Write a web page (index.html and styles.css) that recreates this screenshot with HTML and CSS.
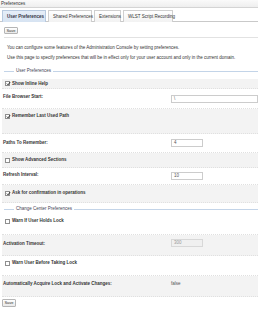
FILE: index.html
```html
<!DOCTYPE html>
<html>
<head>
<meta charset="utf-8">
<link rel="stylesheet" href="styles.css">
</head>
<body>
<div class="header">Preferences</div>
<div class="tabs">
  <div class="tab active">User Preferences</div>
  <div class="tab">Shared Preferences</div>
  <div class="tab">Extensions</div>
  <div class="tab">WLST Script Recording</div>
</div>
<div class="toolbar"><button class="btn">Save</button></div>
<div class="intro">
  <p>You can configure some features of the Administration Console by setting preferences.</p>
  <p>Use this page to specify preferences that will be in effect only for your user account and only in the current domain.</p>
</div>
<div class="form">
  <div class="legend"><span class="lline short"></span><span class="ltext">User Preferences</span><span class="lline"></span></div>
  <div class="row grey h10 center"><span class="cb"><svg viewBox="0 0 6 6"><path d="M1 3.1 L2.5 4.6 L5 1.2" fill="none" stroke="#333" stroke-width="1.2"/></svg></span><span class="clabel">Show Inline Help</span></div>
  <div class="row h20 pt5"><span class="label">File Browser Start:</span><span class="input wide m1">\</span></div>
  <div class="row grey h25 pt4"><span class="cb"><svg viewBox="0 0 6 6"><path d="M1 3.1 L2.5 4.6 L5 1.2" fill="none" stroke="#333" stroke-width="1.2"/></svg></span><span class="clabel">Remember Last Used Path</span></div>
  <div class="row h19 pt6"><span class="label">Paths To Remember:</span><span class="input mn1">4</span></div>
  <div class="row grey h15 pt4"><span class="cb"></span><span class="clabel">Show Advanced Sections</span></div>
  <div class="row h17 pt4"><span class="label">Refresh Interval:</span><span class="input">10</span></div>
  <div class="row grey h18 pt5"><span class="cb"><svg viewBox="0 0 6 6"><path d="M1 3.1 L2.5 4.6 L5 1.2" fill="none" stroke="#333" stroke-width="1.2"/></svg></span><span class="clabel">Ask for confirmation in operations</span></div>
  <div class="legend l2"><span class="lline short"></span><span class="ltext">Change Center Preferences</span><span class="lline"></span></div>
  <div class="row h20 pt3"><span class="cb"></span><span class="clabel">Warn If User Holds Lock</span></div>
  <div class="row grey h21 pt6"><span class="label">Activation Timeout:</span><span class="input disabled mn2">300</span></div>
  <div class="row h20 pt4"><span class="cb"></span><span class="clabel">Warn User Before Taking Lock</span></div>
  <div class="row grey h21 pt5"><span class="label">Automatically Acquire Lock and Activate Changes:</span><span class="value">false</span></div>
</div>
<div class="toolbar bottom"><button class="btn">Save</button></div>
</body>
</html>
```
FILE: styles.css
```css
* { box-sizing: border-box; }
html, body { margin: 0; padding: 0; background: #fff; }
body {
  width: 258px;
  height: 320px;
  overflow: hidden;
  font-family: "Liberation Sans", Arial, sans-serif;
  font-size: 4.5px;
  color: #333;
  line-height: 6px;
}
.header {
  height: 8px;
  line-height: 7px;
  padding-left: 1px;
  background: linear-gradient(#fafafa, #eeeeee);
  border-bottom: 1px solid #d4d4d4;
  color: #333;
}
.tabs {
  display: flex;
  margin-top: 2px;
  padding-left: 2px;
  height: 12px;
  border-bottom: 1px solid #c9c9c9;
}
.tab {
  height: 12px;
  line-height: 11px;
  padding: 0 4px;
  margin-right: 2px;
  border: 1px solid #cfcfcf;
  border-bottom: none;
  background: linear-gradient(#ffffff, #f2f2f2);
  color: #333;
  white-space: nowrap;
}
.tab:nth-child(1) { width: 44px; }
.tab:nth-child(2) { width: 44px; }
.tab:nth-child(3) { width: 27px; }
.tab:nth-child(4) { width: 50px; }
.tab.active {
  background: linear-gradient(#e6eef8, #d6e3f2);
  border-color: #b7c9df;
  font-weight: bold;
  color: #334;
}
.toolbar {
  padding: 5px 0 0 0;
  height: 16px;
  border-bottom: 1px solid #e2e2e2;
  margin: 0 0 0 4px;
}
.btn {
  display: block;
  width: 14px;
  height: 7px;
  padding: 0;
  border: 1px solid #b5b5b5;
  border-radius: 1px;
  background: linear-gradient(#ffffff, #e9e9e9);
  font-family: "Liberation Sans", Arial, sans-serif;
  font-size: 4px;
  line-height: 5px;
  color: #333;
}
.toolbar.bottom {
  border-bottom: none;
  margin-left: 2px;
  padding-top: 2px;
}
.toolbar.bottom .btn { height: 8px; line-height: 6px; }
.intro { padding: 7px 0 0 7px; }
.intro p { margin: 0 0 4px 0; white-space: nowrap; }
.form { padding-left: 2px; margin-top: 6px; }
.legend {
  display: flex;
  align-items: center;
  height: 12px;
  padding-bottom: 4px;
}
.legend.l2 { padding-bottom: 0; }
.lline {
  flex: 1;
  height: 1px;
  background: #c3d4e8;
}
.lline.short { flex: 0 0 10px; margin-left: 2px; }
.ltext { padding: 0 2px; color: #445; }
.row {
  display: flex;
  align-items: flex-start;
  border-bottom: 1px dotted #e0e0e0;
}
.row.grey { background: #f3f3f3; }
.row.center { align-items: center; }
.h10 { height: 10px; }
.h15 { height: 15px; }
.h17 { height: 17px; }
.h18 { height: 18px; }
.h19 { height: 19px; }
.h20 { height: 20px; }
.h21 { height: 21px; }
.h25 { height: 25px; }
.pt3 { padding-top: 3px; }
.pt4 { padding-top: 4px; }
.pt5 { padding-top: 5px; }
.pt6 { padding-top: 6px; }
.cb {
  flex: 0 0 5px;
  width: 5px;
  height: 5px;
  margin: 0.5px 2px 0 3px;
  border: 1px solid #8f8f8f;
  background: #fff;
  display: block;
  position: relative;
}
.cb svg {
  position: absolute;
  left: -0.5px;
  top: -1px;
  width: 5px;
  height: 5px;
  overflow: visible;
}
.clabel { font-weight: bold; color: #333; }
.label {
  flex: 0 0 169px;
  font-weight: bold;
  padding-left: 1px;
  color: #333;
}
.input {
  width: 32px;
  height: 8px;
  border: 1px solid #cccccc;
  background: #fff;
  padding-left: 2px;
  line-height: 6px;
  color: #555;
}
.m1 { margin-top: 1px; }
.mn1 { margin-top: -1px; }
.mn2 { margin-top: -2px; }
.input.wide { width: 90px; }
.input.disabled { background: #f0f0f0; color: #999; border-color: #d8d8d8; }
.value { color: #555; }
```
